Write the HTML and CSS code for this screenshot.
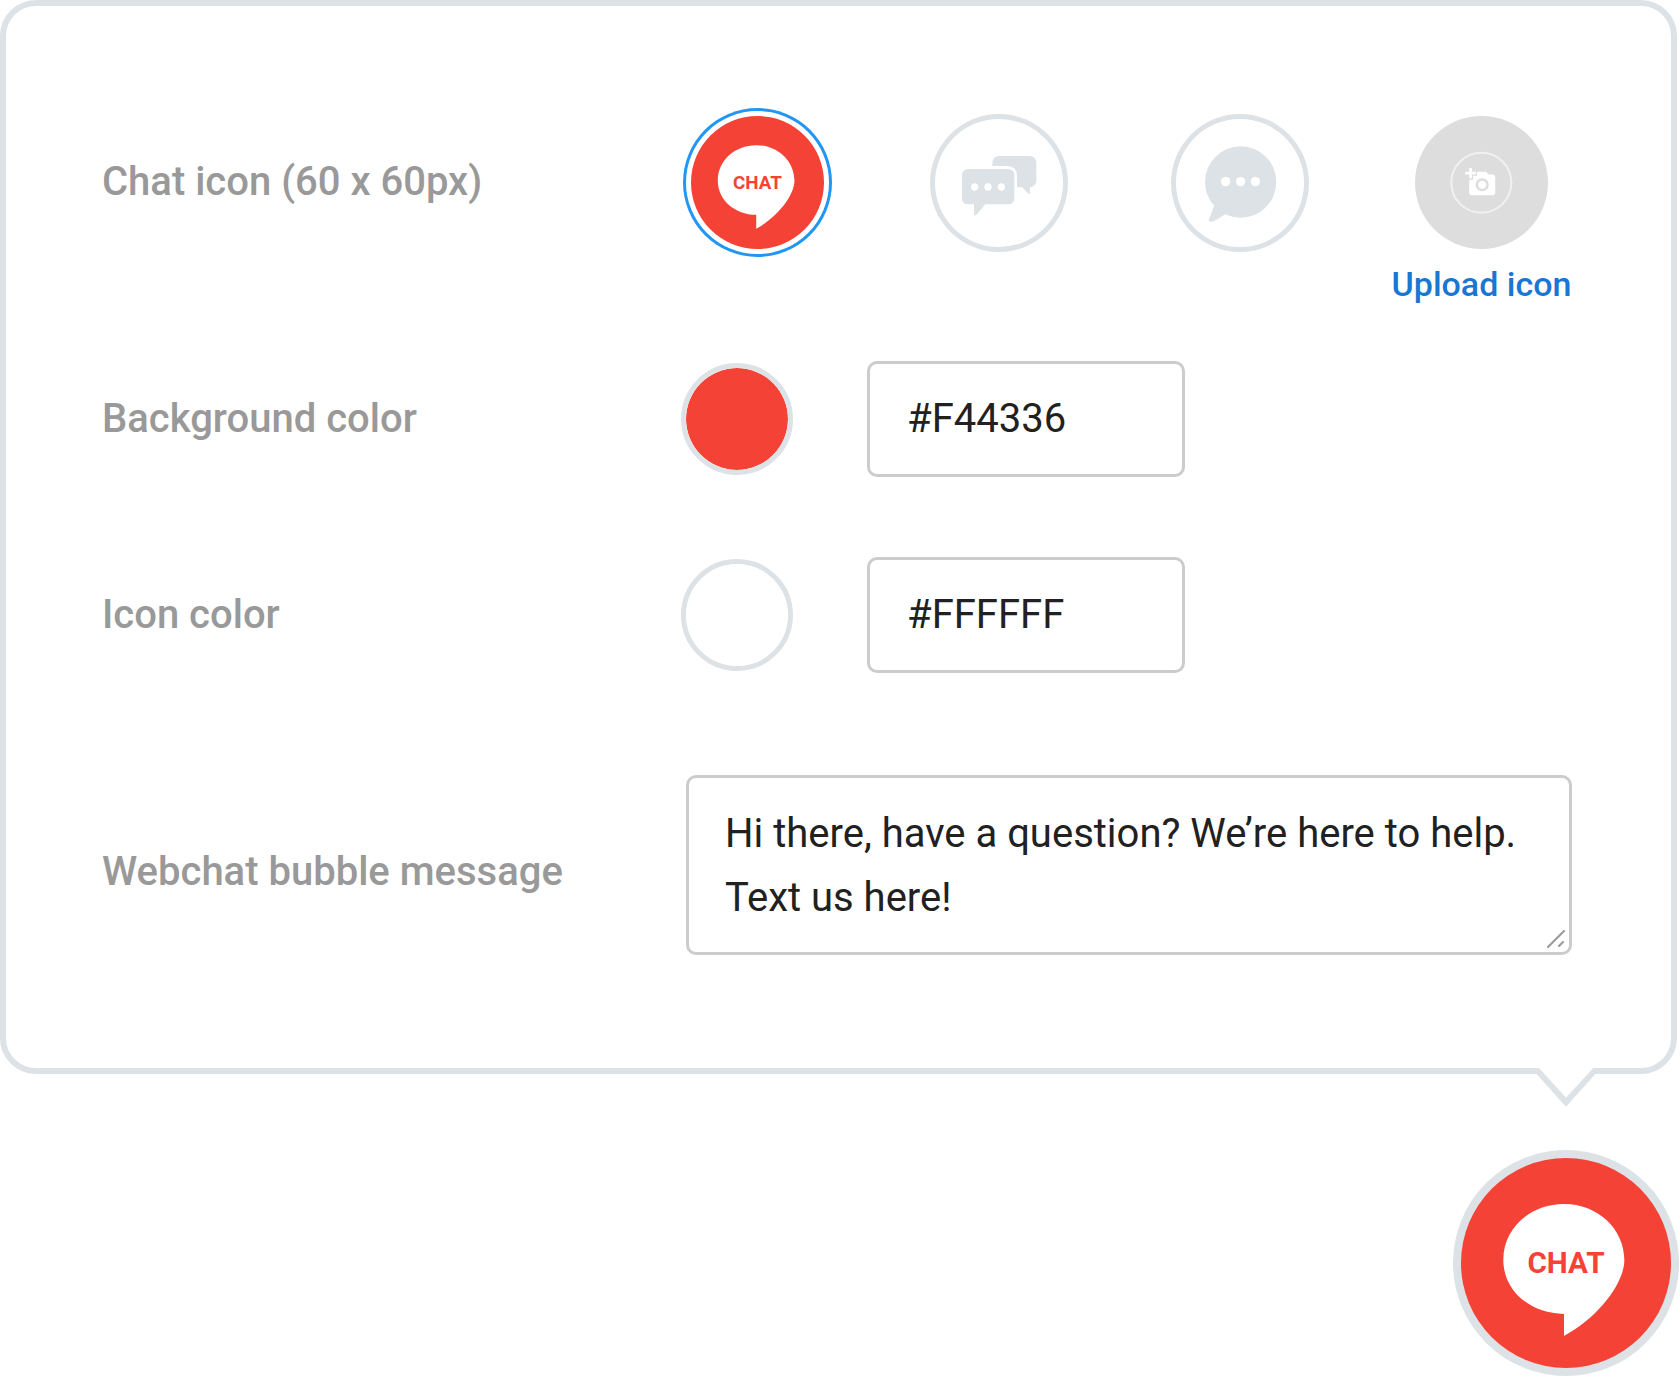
FILE: index.html
```html
<!DOCTYPE html>
<html lang="en">
<head>
    <meta charset="UTF-8">
    <meta name="viewport" content="width=device-width, initial-scale=1.0">
    <title>Webchat Settings</title>
    <link rel="stylesheet" href="styles.css">
</head>
<body>
    <form id="settings-panel">
        <div class="row icon-row">
            <span class="row-label" id="icon-label">Chat icon (60 x 60px)</span>
            <div class="icon-options" role="radiogroup" aria-labelledby="icon-label">
                <label class="icon-option">
                    <input type="radio" name="chat-icon" value="chat" aria-label="Chat" checked>
                    <span class="icon-ring">
                        <svg class="chat-badge" viewBox="0 0 630 630">
                            <circle cx="315" cy="315" r="315" fill="#f44336"/>
                            <path fill="#fff" d="M309 534V468C208 466 127 400 127 305C127 210 209 138 309 138C410 138 490 212 490 307C490 370 420 473 309 534Z"/>
                            <text class="badge-text" x="315" y="345">CHAT</text>
                        </svg>
                    </span>
                </label>
                <label class="icon-option">
                    <input type="radio" name="chat-icon" value="bubbles" aria-label="Two bubbles">
                    <span class="icon-ring">
                        <svg viewBox="30 41 414 414" fill="#dde2e6">
                            <path d="M217 197V189Q217 167 239 167H327Q349 167 349 189V240Q349 258 330 261V278Q329 283 324 279L307 261H291V228Q291 197 261 197Z"/>
                            <path d="M146 206H263Q283 206 283 226V292Q283 312 263 312H196L169 343Q162 348 162 340V312H146Q126 312 126 292V226Q126 206 146 206Z"/>
                            <g fill="#fff">
                                <circle cx="164" cy="260" r="11"/>
                                <circle cx="204" cy="260" r="11"/>
                                <circle cx="244" cy="260" r="11"/>
                            </g>
                        </svg>
                    </span>
                </label>
                <label class="icon-option">
                    <input type="radio" name="chat-icon" value="bubble" aria-label="Round bubble">
                    <span class="icon-ring">
                        <svg viewBox="36 41 414 414" fill="#dde2e6">
                            <circle cx="245" cy="245" r="107"/>
                            <path d="M165 314Q165 322 150 355Q147 365 158 364Q168 363 199 341L240 300Z"/>
                            <g fill="#fff">
                                <circle cx="200" cy="244" r="14"/>
                                <circle cx="245" cy="244" r="14"/>
                                <circle cx="289" cy="244" r="14"/>
                            </g>
                        </svg>
                    </span>
                </label>
                <button type="button" class="upload-button">
                    <span class="upload-circle">
                        <svg viewBox="0 0 399 399">
                            <circle cx="199" cy="200" r="90" fill="none" stroke="#f1f1f1" stroke-width="6"/>
                            <path fill="#fff" transform="translate(151 152) scale(3.9)" d="M3 4V1h2v3h3v2H5v3H3V6H0V4h3zm3 6V7h3V4h7l1.83 2H21c1.1 0 2 .9 2 2v12c0 1.1-.9 2-2 2H5c-1.1 0-2-.9-2-2V10h3zm7 9c2.76 0 5-2.24 5-5s-2.24-5-5-5-5 2.24-5 5 2.24 5 5 5zm-3.2-5c0 1.77 1.43 3.2 3.2 3.2s3.2-1.43 3.2-3.2-1.43-3.2-3.2-3.2-3.2 1.43-3.2 3.2z"/>
                        </svg>
                    </span>
                    Upload icon
                </button>
            </div>
        </div>

        <div class="row">
            <label class="row-label" for="background-input">Background color</label>
            <div class="color-control">
                <input type="color" value="#f44336" aria-label="Pick background color">
                <input type="text" id="background-input" value="#F44336">
            </div>
        </div>

        <div class="row">
            <label class="row-label" for="icon-color-input">Icon color</label>
            <div class="color-control">
                <input type="color" value="#ffffff" aria-label="Pick icon color">
                <input type="text" id="icon-color-input" value="#FFFFFF">
            </div>
        </div>

        <div class="row message-row">
            <label class="row-label" for="message-input">Webchat bubble message</label>
            <div class="message-control">
                <textarea id="message-input" rows="2">Hi there, have a question? We’re here to help. Text us here!</textarea>
                <svg class="resize-grip" viewBox="0 0 18 18" stroke="#999" stroke-width="2" stroke-linecap="round">
                    <path d="M1 17L17 1M12 16L16 12"/>
                </svg>
            </div>
        </div>

        <svg class="panel-arrow" viewBox="282 84 192 117">
            <path fill="#dde2e6" d="M282 84H474V101H467L378 200L289 101H282Z"/>
            <path fill="#fff" d="M297 84H460L378 173Z"/>
        </svg>
    </form>

    <div class="launcher">
        <button type="button" class="launcher-button">
            <svg class="chat-badge" viewBox="0 0 630 630">
                <circle cx="315" cy="315" r="315" fill="#f44336"/>
                <path fill="#fff" d="M309 534V468C208 466 127 400 127 305C127 210 209 138 309 138C410 138 490 212 490 307C490 370 420 473 309 534Z"/>
                <text class="badge-text" x="315" y="345">CHAT</text>
            </svg>
        </button>
    </div>
</body>
</html>
```

FILE: styles.css
```css
* {
    box-sizing: border-box;
}
body {
    margin: 0;
    background-color: white;
    font-family: Roboto, Arial, sans-serif;
    font-size: 40px;
    line-height: 48px;
    color: #212121;
}
svg {
    display: block;
}
input,
textarea,
button {
    margin: 0;
    font-family: inherit;
    color: inherit;
}
#settings-panel {
    position: relative;
    margin-right: 3px;
    padding: 102px 99px 113px 96px;
    border: 6px solid #dde2e6;
    border-radius: 36px;
}
.row {
    display: grid;
    grid-template-columns: 579px 1fr;
    align-items: center;
    margin-bottom: 80px;
}
.row-label {
    font-weight: 500;
    color: #999;
}

/* icon picker */
.icon-row {
    align-items: start;
    margin-bottom: 57px;
}
.icon-row .row-label {
    line-height: 148px;
}
.icon-options {
    display: flex;
    justify-content: space-between;
    margin-left: -14px;
}
.icon-option {
    position: relative;
    display: flex;
    align-items: center;
    justify-content: center;
    width: 181px;
    height: 149px;
    cursor: pointer;
}
.icon-option input {
    position: absolute;
    opacity: 0;
}
.icon-ring {
    width: 138px;
    height: 138px;
    border-radius: 50%;
    box-shadow: inset 0 0 0 5px #dde2e6;
}
.icon-option input:checked + .icon-ring {
    width: 149px;
    height: 149px;
    padding: 8px;
    box-shadow: inset 0 0 0 3px #2196f3;
}
.badge-text {
    font-size: 89px;
    font-weight: 700;
    text-anchor: middle;
    fill: #f44336;
}
.upload-button {
    width: 181px;
    padding: 8px 0 0;
    border: none;
    background: none;
    font-size: 34px;
    font-weight: 500;
    line-height: 40px;
    white-space: nowrap;
    color: #1976d2;
    cursor: pointer;
}
.upload-circle {
    display: block;
    width: 133px;
    height: 133px;
    margin: 0 auto 15px;
    border-radius: 50%;
    background-color: #ddd;
}

/* colors */
.color-control {
    display: flex;
    align-items: center;
    gap: 74px;
}
input[type="color"] {
    appearance: none;
    width: 112px;
    height: 112px;
    padding: 0;
    border: 5px solid #dde2e6;
    border-radius: 50%;
    background: none;
    overflow: hidden;
    cursor: pointer;
}
input[type="color"]::-webkit-color-swatch-wrapper {
    padding: 0;
}
input[type="color"]::-webkit-color-swatch {
    border: none;
    border-radius: 50%;
}
input[type="text"] {
    width: 318px;
    height: 116px;
    padding: 0 37px 2px;
    border: 3px solid #ccc;
    border-radius: 10px;
    font-size: 40px;
}

/* message */
.message-row {
    margin: 102px 0 0;
}
.message-row .row-label {
    padding-top: 14px;
}
.message-control {
    position: relative;
    margin-left: 5px;
}
textarea {
    display: block;
    width: 100%;
    height: 180px;
    padding: 24px 36px 22px;
    border: 3px solid #ccc;
    border-radius: 10px;
    font-size: 40px;
    line-height: 64px;
    resize: none;
    overflow: hidden;
}
.resize-grip {
    position: absolute;
    right: 7px;
    bottom: 7px;
    width: 18px;
    height: 18px;
    pointer-events: none;
}
.panel-arrow {
    position: absolute;
    right: 73px;
    bottom: -39px;
    width: 64px;
    height: 39px;
}

/* launcher */
.launcher {
    display: flex;
    justify-content: flex-end;
    margin-top: 76px;
    padding-right: 1px;
}
.launcher-button {
    width: 226px;
    height: 226px;
    padding: 0;
    border: 8px solid #dde2e6;
    border-radius: 50%;
    background-color: #dde2e6;
    cursor: pointer;
}
```
